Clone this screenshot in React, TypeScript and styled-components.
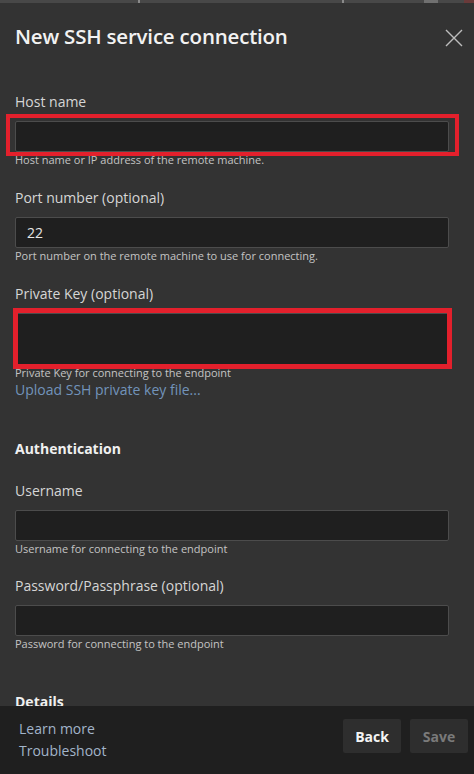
import React from "react";
import styled, { createGlobalStyle } from "styled-components";

const Global = createGlobalStyle`
  html, body { margin: 0; padding: 0; background: #333333; }
  body { font-family: "Open Sans", "Noto Sans", Arial, sans-serif; }
  * { box-sizing: border-box; }
`;

const Panel = styled.div`
  width: 474px;
  height: 774px;
  display: flex;
  flex-direction: column;
  background: #333333;
  overflow: hidden;
`;

const TopStrip = styled.div`
  height: 3px;
  flex: none;
  background:
    linear-gradient(90deg,
      transparent 138px, #8a8a8a 138px, #8a8a8a 140px, transparent 140px,
      transparent 342px, #8a8a8a 342px, #8a8a8a 344px, transparent 344px,
      transparent 424px, #707070 424px, #707070 438px, transparent 438px,
      transparent 464px, #6a3a3a 464px, #6a3a3a 474px, transparent 474px),
    #484848;
`;

const Header = styled.div`
  height: 89px;
  flex: none;
  display: flex;
  justify-content: space-between;
  align-items: flex-start;
  padding: 19px 11px 0 15px;
`;

const Title = styled.h1`
  margin: 0;
  font-size: 20.5px;
  line-height: 28px;
  font-weight: 600;
  color: #f2f2f2;
  letter-spacing: -0.2px;
`;

const CloseButton = styled.button`
  background: none;
  border: none;
  padding: 0;
  margin-top: 7px;
  width: 18px;
  height: 18px;
  display: flex;
  cursor: pointer;
`;

const Body = styled.div`
  flex: 1;
  min-height: 0;
  overflow: hidden;
  padding: 0 25px 0 15px;
  display: flex;
  flex-direction: column;
`;

const Field = styled.div<{ $gap?: number }>`
  display: flex;
  flex-direction: column;
  margin-bottom: ${(p) => p.$gap ?? 21}px;
`;

const Label = styled.label`
  font-size: 14px;
  line-height: 20px;
  color: #d6d6d6;
  margin-bottom: 9px;
`;

const InputWrap = styled.div`
  position: relative;
`;

const TextInput = styled.div<{ $tall?: boolean }>`
  height: ${(p) => (p.$tall ? 52 : 31)}px;
  background: #1f1f1f;
  border: 1px solid #4c4c4c;
  border-radius: 2px;
  color: #e6e6e6;
  font-size: 14px;
  line-height: 29px;
  padding: 0 11px;
`;

const Highlight = styled.div<{ $t: number; $r: number; $b: number; $l: number; $w: number }>`
  position: absolute;
  top: ${(p) => -p.$t}px;
  right: ${(p) => -p.$r}px;
  bottom: ${(p) => -p.$b}px;
  left: ${(p) => -p.$l}px;
  border: ${(p) => p.$w}px solid #e3202c;
  pointer-events: none;
`;

const Helper = styled.div`
  font-size: 11px;
  line-height: 15px;
  color: #c4c4c4;
`;

const Link = styled.a`
  font-size: 14px;
  line-height: 20px;
  color: #7293bb;
  text-decoration: none;
`;

const Section = styled.h2`
  margin: 0;
  font-size: 14px;
  line-height: 20px;
  font-weight: 700;
  color: #f0f0f0;
`;

const Footer = styled.div`
  height: 68px;
  flex: none;
  background: #1f1f1f;
  display: flex;
  align-items: flex-start;
  justify-content: space-between;
  padding: 12px 6px 0 19px;
`;

const FooterLinks = styled.div`
  display: flex;
  flex-direction: column;
`;

const FooterLink = styled.a`
  font-size: 14px;
  line-height: 22px;
  color: #a2b4ca;
  text-decoration: none;
`;

const Buttons = styled.div`
  display: flex;
  gap: 9px;
  margin-top: 1px;
`;

const Button = styled.button<{ $disabled?: boolean }>`
  width: 58px;
  height: 34px;
  border: none;
  border-radius: 2px;
  background: #2e2e2e;
  color: ${(p) => (p.$disabled ? "#7a7a7a" : "#f4f4f4")};
  font-family: inherit;
  font-size: 14px;
  font-weight: 700;
  padding: 0;
`;

export default function App() {
  return (
    <>
      <Global />
      <Panel>
        <TopStrip />
        <Header>
          <Title>New SSH service connection</Title>
          <CloseButton aria-label="Close">
            <svg width="18" height="18" viewBox="0 0 18 18">
              <path d="M1 1 L17 17 M17 1 L1 17" stroke="#bdbdbd" strokeWidth="1.4" fill="none" />
            </svg>
          </CloseButton>
        </Header>
        <Body>
          <Field>
            <Label>Host name</Label>
            <InputWrap>
              <TextInput />
              <Highlight $t={7} $r={10} $b={4} $l={9} $w={4} />
            </InputWrap>
            <Helper>Host name or IP address of the remote machine.</Helper>
          </Field>
          <Field $gap={21}>
            <Label>Port number (optional)</Label>
            <TextInput>22</TextInput>
            <Helper>Port number on the remote machine to use for connecting.</Helper>
          </Field>
          <Field $gap={39}>
            <Label>Private Key (optional)</Label>
            <InputWrap>
              <TextInput $tall />
              <Highlight $t={5} $r={3} $b={4} $l={2} $w={5} />
            </InputWrap>
            <Helper>Private Key for connecting to the endpoint</Helper>
            <Link href="#">Upload SSH private key file...</Link>
          </Field>
          <Field $gap={22}>
            <Section>Authentication</Section>
          </Field>
          <Field $gap={20}>
            <Label>Username</Label>
            <TextInput />
            <Helper>Username for connecting to the endpoint</Helper>
          </Field>
          <Field $gap={41}>
            <Label>Password/Passphrase (optional)</Label>
            <TextInput />
            <Helper>Password for connecting to the endpoint</Helper>
          </Field>
          <Section>Details</Section>
        </Body>
        <Footer>
          <FooterLinks>
            <FooterLink href="#">Learn more</FooterLink>
            <FooterLink href="#">Troubleshoot</FooterLink>
          </FooterLinks>
          <Buttons>
            <Button>Back</Button>
            <Button $disabled>Save</Button>
          </Buttons>
        </Footer>
      </Panel>
    </>
  );
}
